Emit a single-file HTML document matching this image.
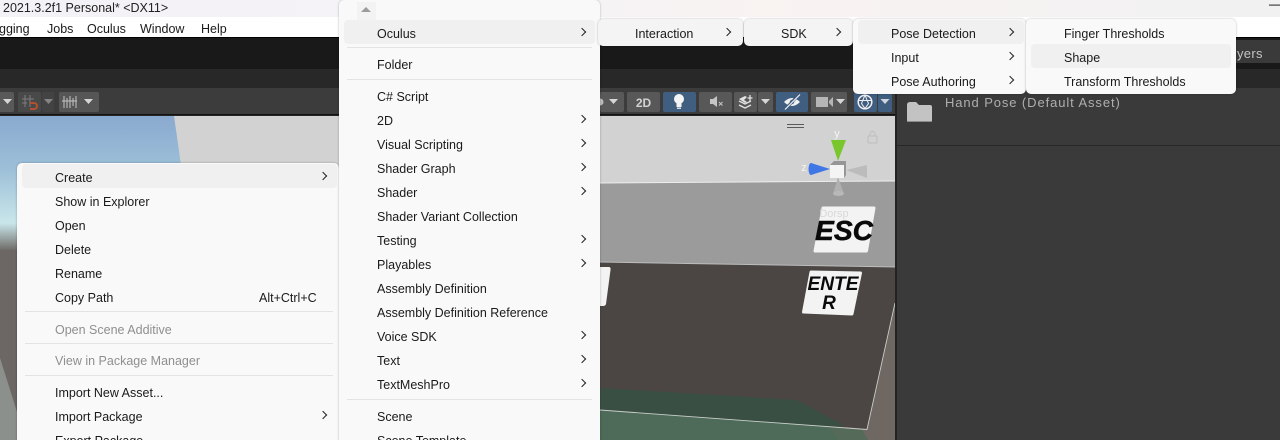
<!DOCTYPE html>
<html><head><meta charset="utf-8"><style>
html,body{margin:0;padding:0;width:1280px;height:440px;overflow:hidden;background:#3a3a3a}
*{box-sizing:border-box}
#r{position:relative;width:1280px;height:440px;overflow:hidden;font:12.5px/16px "Liberation Sans",sans-serif;color:#1a1a1a}
.a{position:absolute}
.t{position:absolute;white-space:nowrap;line-height:16px;margin-top:1px}
.m{position:absolute;background:#f9f9f9;border-radius:5px;box-shadow:0 0 2px rgba(0,0,0,.28)}
.h{position:absolute;background:#f0f0f0;border-radius:4px}
.s{position:absolute;height:1px;background:#e3e3e3}
.c{position:absolute;width:6px;height:6px;margin:-.5px 0 0 -1px;border-top:1.1px solid #222;border-right:1.1px solid #222;transform:rotate(45deg)}
.d{color:#8f8f8f}
</style></head><body><div id="r">
<svg class="a" style="left:0;top:0" width="1280" height="440" viewBox="0 0 1280 440">
<defs>
<linearGradient id="g1" x1="0" y1="116" x2="0" y2="250" gradientUnits="userSpaceOnUse"><stop offset="0" stop-color="#8aa9cf"/><stop offset=".4" stop-color="#9dc0d8"/><stop offset=".8" stop-color="#c9e6ea"/><stop offset="1" stop-color="#6f6d69"/></linearGradient>
<linearGradient id="tb" x1="0" y1="0" x2="1" y2="0"><stop offset="0" stop-color="#f3f2f7"/><stop offset=".42" stop-color="#f5f3f5"/><stop offset=".6" stop-color="#f9f3f2"/><stop offset=".8" stop-color="#f5f2f2"/><stop offset="1" stop-color="#f1f1f2"/></linearGradient>
</defs>
<rect width="1280" height="17" fill="url(#tb)"/>
<rect x="1269" y="4.5" width="11" height="1.2" fill="#444"/>
<rect y="17" width="1280" height="20" fill="#fff"/>
<rect y="37" width="1280" height="1" fill="#000"/>
<rect y="38" width="1280" height="31" fill="#191919"/>
<rect x="1236" y="40" width="44" height="23" fill="#3a3a3a"/>
<rect y="69" width="1280" height="19" fill="#282828"/>
<rect y="88" width="1280" height="27" fill="#3c3c3c"/>
<rect y="114" width="896" height="1.5" fill="#111"/>
<!-- scene -->
<rect y="116" width="896" height="324" fill="#d2d2d2"/>
<polygon points="0,116 174,116 181,165 181,260 0,260" fill="url(#g1)"/>
<rect y="250" width="17" height="190" fill="#6c6764"/>
<polygon points="0,358 17,412 17,440 0,440" fill="#8b908c"/>
<polygon points="600,183 896,181 896,267 600,262" fill="#9b9b9b"/>
<polygon points="600,262 896,267 896,440 600,440" fill="#4b4643"/>
<polygon points="600,388 797,400 845,426 600,426" fill="#3a4f43"/>
<polygon points="600,410 867,429 867,440 600,440" fill="#4d6b58"/>
<polygon points="845,427 867,429 867,440" fill="#6f6761"/>
<polygon points="867,429 895,303 896,440 845,440 867,440" fill="#6f6761"/>
<polygon points="830,428 862,429 868,440 838,440" fill="#566a5a"/>
<polyline points="600,410 867,429.500 895,303" fill="none" stroke="#c9cdc9" stroke-width=".9"/>
<line x1="600" y1="262" x2="896" y2="267" stroke="#bdbdbd" stroke-width="1"/>
<line x1="600" y1="183" x2="896" y2="181" stroke="#ededed" stroke-width="1"/>
<!-- keys -->
<path d="M823 208L874 208L866.500 251L815 251Z" fill="#f3f3f3" stroke="#f3f3f3" stroke-width="3" stroke-linejoin="round"/>
<path d="M811 272L860.500 273L852 314L803.500 312Z" fill="#f3f3f3" stroke="#f3f3f3" stroke-width="3" stroke-linejoin="round"/>
<path d="M600 267L609 267Q611 267 610.500 270L606 304Q605.500 306 603 306L600 306Z" fill="#f3f3f3"/>
<text x="834" y="217" font-family="Liberation Sans" font-size="11" fill="#d8d8d8" text-anchor="middle">Dorsp</text>
<text x="844" y="240" text-anchor="middle" font-family="Liberation Sans" font-weight="700" font-style="italic" font-size="28" fill="#0a0a0a" textLength="58" lengthAdjust="spacingAndGlyphs" stroke="#0a0a0a" stroke-width=".5">ESC</text>
<text x="833" y="290" text-anchor="middle" font-family="Liberation Sans" font-weight="700" font-style="italic" font-size="19" fill="#0a0a0a" textLength="51" lengthAdjust="spacingAndGlyphs">ENTE</text>
<text x="829" y="309" text-anchor="middle" font-family="Liberation Sans" font-weight="700" font-style="italic" font-size="19" fill="#0a0a0a">R</text>
<!-- gizmo -->
<rect x="787" y="124" width="17" height="1" fill="#5a5a5a"/><rect x="787" y="127" width="17" height="1" fill="#5a5a5a"/>
<polygon points="831,140 846,140 838,161" fill="#79c72d"/>
<polygon points="811,163 830,169 811,175" fill="#3f78e6"/>
<ellipse cx="811" cy="169" rx="2.500" ry="6" fill="#3f78e6"/>
<polygon points="867,165 867,178 846,170" fill="#bcbcbc"/>
<polygon points="838,177 833,194 844,194" fill="#b0b0b0"/>
<ellipse cx="838.500" cy="193.500" rx="5.500" ry="2.500" fill="#b8b8b8"/>
<polygon points="830,165 834,161 846,161 846,175 844,178" fill="#969696"/>
<rect x="830" y="165" width="14" height="13" fill="#f4f4f4"/>
<text x="837" y="137" font-size="11" text-anchor="middle" font-family="Liberation Sans" fill="#f4f4f4">y</text>
<text x="804" y="171" font-size="11" text-anchor="middle" font-family="Liberation Sans" fill="#f4f4f4">z</text>
<rect x="868" y="136" width="9" height="7" rx="1" fill="none" stroke="#bdbdbd" stroke-width="1"/>
<path d="M870 136v-2a2.500 2.500 0 0 1 5 0v2" fill="none" stroke="#bdbdbd" stroke-width="1"/>
<!-- left toolbar -->
<rect x="-3" y="92" width="17" height="20" rx="2" fill="#595959"/>
<polygon points="3,99 12,99 7.500,104" fill="#d6d6d6"/>
<rect x="18" y="92" width="23" height="20" rx="2" fill="#494949"/>
<rect x="42" y="92" width="12" height="20" rx="2" fill="#434343"/>
<polygon points="44,99 53,99 48.500,104" fill="#858585"/>
<path d="M25 95v12M30 95v12M22 99h12M22 103h5" stroke="#7d7d7d" stroke-width="1" fill="none"/>
<path d="M30 103h4a2.500 2.500 0 0 1 0 6h-4" stroke="#b4502d" stroke-width="2" fill="none"/>
<rect x="59" y="92" width="40" height="20" rx="2" fill="#565656"/>
<path d="M64 96v12M67 98v10M70 96v12M73 98v8M76 96v12M62 101h15" stroke="#c4c4c4" stroke-width="1" fill="none"/>
<polygon points="84,99 93,99 88.500,104" fill="#d6d6d6"/>
<!-- right toolbar -->
<rect x="600" y="92" width="24" height="20" rx="2" fill="#595959"/>
<circle cx="600" cy="102" r="3.500" fill="#bdbdbd"/>
<polygon points="609,99 618,99 613.500,104" fill="#d6d6d6"/>
<rect x="627" y="92" width="33" height="20" rx="2" fill="#585858"/>
<text x="643.500" y="107" font-size="12" font-weight="700" text-anchor="middle" font-family="Liberation Sans" fill="#d2d2d2">2D</text>
<rect x="663" y="92" width="33" height="20" rx="2" fill="#3f5e80"/>
<circle cx="679" cy="99" r="5" fill="#f4f4f4"/>
<rect x="676.500" y="102" width="5" height="5" fill="#f4f4f4"/>
<rect x="677" y="107.500" width="4" height="1.500" fill="#dcdcdc"/>
<rect x="699" y="92" width="33" height="20" rx="2" fill="#585858"/>
<path d="M710 99h3l4-3v11l-4-3h-3z" fill="#c4c4c4"/>
<path d="M719 102l3.500 3.500M722.500 102l-3.500 3.500" stroke="#c4c4c4" stroke-width="1"/>
<rect x="734" y="92" width="23" height="20" rx="2" fill="#585858"/>
<path d="M739 101l6 3 6-3M739 105l6 3 6-3" stroke="#e2e2e2" stroke-width="1.300" fill="none"/>
<path d="M739 99l6-3 2 1-3 3 3 2-2 1z" fill="#e2e2e2"/>
<path d="M750 95v6M747.500 98h5" stroke="#e2e2e2" stroke-width="1.300"/>
<rect x="758" y="92" width="15" height="20" rx="2" fill="#585858"/>
<polygon points="761,99 770,99 765.500,104" fill="#d6d6d6"/>
<rect x="776" y="92" width="32" height="20" rx="2" fill="#3f5e80"/>
<path d="M784 102q8-8 16 0q-8 8-16 0z" fill="#f0f0f0"/>
<circle cx="792" cy="102" r="2.200" fill="#3f5e80"/>
<path d="M785 109.500l14-15" stroke="#3f5e80" stroke-width="3"/>
<path d="M785 109.500l15-15" stroke="#f0f0f0" stroke-width="1.200"/>
<rect x="811" y="92" width="36" height="20" rx="2" fill="#585858"/>
<rect x="816" y="97" width="12" height="10" fill="#b5b5b5"/>
<polygon points="829,101 829,103 833,107 833,97" fill="#b5b5b5"/>
<polygon points="836,99 845,99 840.500,104" fill="#d6d6d6"/>
<rect x="854" y="92" width="23" height="20" rx="2" fill="#3f5e80"/>
<circle cx="865" cy="102" r="6.800" fill="none" stroke="#f0f0f0" stroke-width="1.500"/>
<path d="M858.500 100.500h13M865 95l-3.500 8.500 3.500 5 3.500-5z" stroke="#f0f0f0" stroke-width="1" fill="none"/>
<rect x="878" y="92" width="14" height="20" rx="2" fill="#3f5e80"/>
<polygon points="880.500,99 889.500,99 885,104" fill="#cfd6de"/>
<!-- right panel -->
<rect x="896" y="88" width="384" height="352" fill="#3a3a3a"/>
<rect x="895" y="88" width="2" height="352" fill="#232323"/>
<rect x="897" y="145" width="383" height="1" fill="#272727"/>
<path d="M907 105q0-3 3-3h6l3 3h11q2 0 2 2v13q0 2-2 2h-21q-2 0-2-2z" fill="#c3c3c3"/>
<rect x="907" y="121" width="25" height="1" fill="#8a8a8a"/>
</svg>
<div class="t" style="left:3px;top:-1px;color:#222">2021.3.2f1 Personal* &lt;DX11&gt;</div>
<div class="t" style="left:-1px;top:20px">gging</div>
<div class="t" style="left:47px;top:20px">Jobs</div>
<div class="t" style="left:87px;top:20px">Oculus</div>
<div class="t" style="left:140px;top:20px">Window</div>
<div class="t" style="left:201px;top:20px">Help</div>
<div class="t" style="left:1237px;top:45px;color:#c4c4c4;font-size:13px;letter-spacing:.3px">yers</div>
<div class="t" style="left:945px;top:94px;color:#aeaeae;font-size:13px;letter-spacing:.9px">Hand Pose (Default Asset)</div>

<!-- context menu -->
<div class="m" style="left:17px;top:163px;width:322px;height:290px"></div>
<div class="h" style="left:22px;top:164px;width:315px;height:24px"></div>
<div class="t" style="left:55px;top:169px">Create</div><div class="c" style="left:321px;top:173px"></div>
<div class="t" style="left:55px;top:193px">Show in Explorer</div>
<div class="t" style="left:55px;top:217px">Open</div>
<div class="t" style="left:55px;top:241px">Delete</div>
<div class="t" style="left:55px;top:265px">Rename</div>
<div class="t" style="left:55px;top:289px">Copy Path</div>
<div class="t" style="left:259px;top:289px">Alt+Ctrl+C</div>
<div class="s" style="left:25px;top:311px;width:308px"></div>
<div class="t d" style="left:55px;top:321px">Open Scene Additive</div>
<div class="s" style="left:25px;top:343px;width:308px"></div>
<div class="t d" style="left:55px;top:352px">View in Package Manager</div>
<div class="s" style="left:25px;top:375px;width:308px"></div>
<div class="t" style="left:55px;top:384px">Import New Asset...</div>
<div class="t" style="left:55px;top:408px">Import Package</div><div class="c" style="left:321px;top:412px"></div>
<div class="t" style="left:55px;top:432px">Export Package</div>

<!-- create menu -->
<div class="m" style="left:339px;top:0;width:261px;height:460px"></div>
<div class="a" style="left:357px;top:2px;width:19px;height:18px;background:#f3f3f3"></div>
<div class="a" style="left:361px;top:7px;width:0;height:0;border-left:5px solid transparent;border-right:5px solid transparent;border-bottom:5px solid #9c9c9c"></div>
<div class="h" style="left:344px;top:20px;width:251px;height:24px"></div>
<div class="t" style="left:377px;top:25px">Oculus</div><div class="c" style="left:580px;top:29px"></div>
<div class="s" style="left:347px;top:47px;width:245px"></div>
<div class="t" style="left:377px;top:56px">Folder</div>
<div class="s" style="left:347px;top:79px;width:245px"></div>
<div class="t" style="left:377px;top:88px">C# Script</div>
<div class="t" style="left:377px;top:112px">2D</div><div class="c" style="left:580px;top:116px"></div>
<div class="t" style="left:377px;top:136px">Visual Scripting</div><div class="c" style="left:580px;top:140px"></div>
<div class="t" style="left:377px;top:160px">Shader Graph</div><div class="c" style="left:580px;top:164px"></div>
<div class="t" style="left:377px;top:184px">Shader</div><div class="c" style="left:580px;top:188px"></div>
<div class="t" style="left:377px;top:208px">Shader Variant Collection</div>
<div class="t" style="left:377px;top:232px">Testing</div><div class="c" style="left:580px;top:236px"></div>
<div class="t" style="left:377px;top:256px">Playables</div><div class="c" style="left:580px;top:260px"></div>
<div class="t" style="left:377px;top:280px">Assembly Definition</div>
<div class="t" style="left:377px;top:304px">Assembly Definition Reference</div>
<div class="t" style="left:377px;top:328px">Voice SDK</div><div class="c" style="left:580px;top:332px"></div>
<div class="t" style="left:377px;top:352px">Text</div><div class="c" style="left:580px;top:356px"></div>
<div class="t" style="left:377px;top:376px">TextMeshPro</div><div class="c" style="left:580px;top:380px"></div>
<div class="s" style="left:347px;top:399px;width:245px"></div>
<div class="t" style="left:377px;top:408px">Scene</div>
<div class="t" style="left:377px;top:432px">Scene Template</div>

<!-- submenus -->
<div class="m" style="left:598px;top:19px;width:145px;height:27px;background:#f4f4f4"></div>
<div class="t" style="left:635px;top:25px">Interaction</div><div class="c" style="left:725px;top:29px"></div>
<div class="m" style="left:744px;top:19px;width:109px;height:27px;background:#f4f4f4"></div>
<div class="t" style="left:781px;top:25px">SDK</div><div class="c" style="left:835px;top:29px"></div>
<div class="m" style="left:853px;top:19px;width:173px;height:75px"></div>
<div class="h" style="left:858px;top:20px;width:166px;height:24px"></div>
<div class="t" style="left:891px;top:25px">Pose Detection</div><div class="c" style="left:1008px;top:29px"></div>
<div class="t" style="left:891px;top:49px">Input</div><div class="c" style="left:1008px;top:53px"></div>
<div class="t" style="left:891px;top:73px">Pose Authoring</div><div class="c" style="left:1008px;top:77px"></div>
<div class="m" style="left:1026px;top:19px;width:210px;height:75px"></div>
<div class="h" style="left:1031px;top:44px;width:200px;height:24px"></div>
<div class="t" style="left:1064px;top:25px">Finger Thresholds</div>
<div class="t" style="left:1064px;top:49px">Shape</div>
<div class="t" style="left:1064px;top:73px">Transform Thresholds</div>
</div></body></html>
